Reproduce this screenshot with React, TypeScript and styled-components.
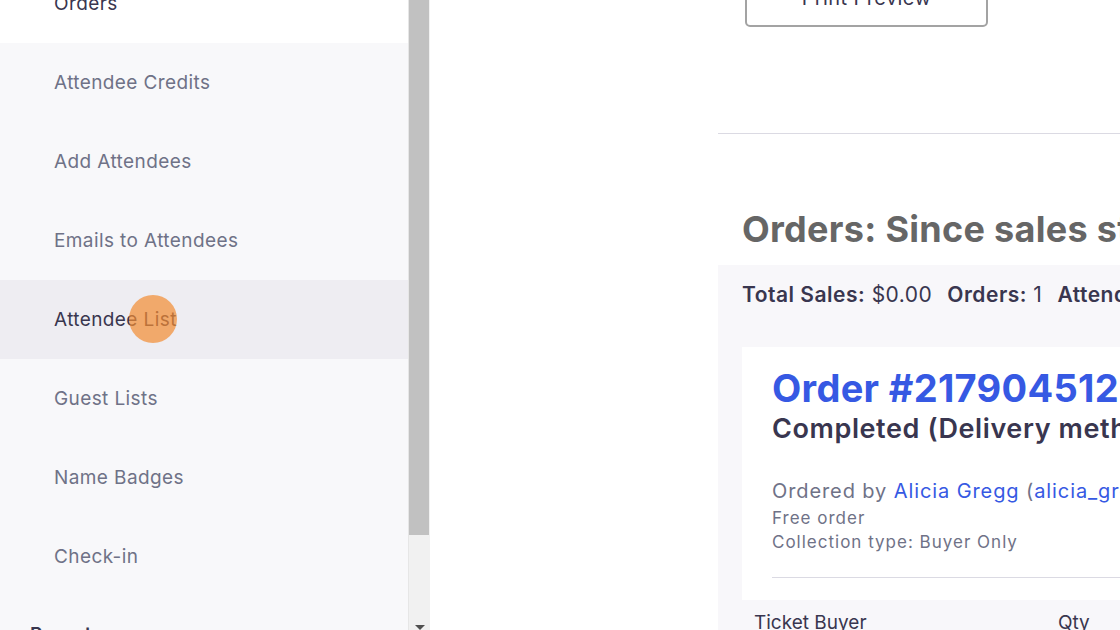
import React from "react";
import styled, { createGlobalStyle } from "styled-components";

const GlobalStyle = createGlobalStyle`
  html, body { margin: 0; padding: 0; overflow: hidden; background: #fff; }
  body { font-family: Inter, "Noto Sans", sans-serif; -webkit-font-smoothing: antialiased; }
  * { box-sizing: border-box; }
`;

const Page = styled.div`
  display: flex;
  width: 1120px;
  height: 630px;
  overflow: hidden;
`;

const Sidebar = styled.nav`
  width: 408px;
  flex: none;
  background: #f8f8fa;
  display: flex;
  flex-direction: column;
`;

const NavList = styled.div`
  margin-top: -36px;
  display: flex;
  flex-direction: column;
`;

const NavItem = styled.div<{ $active?: boolean; $top?: boolean }>`
  position: relative;
  height: 79px;
  display: flex;
  align-items: center;
  padding-left: 54px;
  font-size: 19px;
  letter-spacing: 0.4px;
  color: ${(p) => (p.$active || p.$top ? "#39364f" : "#6f7287")};
  background: ${(p) => (p.$top ? "#ffffff" : p.$active ? "#eeedf2" : "transparent")};
`;

const ClickMark = styled.span`
  position: absolute;
  left: 129px;
  top: 15px;
  width: 48px;
  height: 48px;
  border-radius: 50%;
  background: rgba(242, 140, 50, 0.7);
  pointer-events: none;
`;

const SectionTitle = styled.div`
  padding: 27px 0 0 30px;
  font-size: 19px;
  font-weight: 600;
  color: #39364f;
`;

const ScrollTrack = styled.div`
  width: 22px;
  flex: none;
  background: #f1f1f1;
  border-left: 1px solid #e6e6e6;
  display: flex;
  flex-direction: column;
`;

const ScrollThumb = styled.div`
  height: 535px;
  width: 20px;
  background: #c1c1c1;
`;

const ScrollArrow = styled.div`
  margin-top: auto;
  height: 10px;
  display: flex;
  justify-content: center;
  align-items: flex-end;
  &::after {
    content: "";
    border-left: 5px solid transparent;
    border-right: 5px solid transparent;
    border-top: 5px solid #505050;
  }
`;

const Main = styled.main`
  flex: 1;
  min-width: 0;
  background: #fff;
  padding-left: 288px;
  display: flex;
  flex-direction: column;
  overflow: hidden;
`;

const ButtonRow = styled.div`
  margin-top: -31px;
  padding-left: 27px;
`;

const OutlineButton = styled.button`
  width: 243px;
  height: 58px;
  border: 2px solid #a3a3a3;
  border-radius: 5px;
  background: #fff;
  font-family: inherit;
  font-size: 20px;
  letter-spacing: 0.4px;
  color: #39364f;
  padding: 0;
`;

const Rule = styled.hr`
  margin: 106px 0 0;
  border: 0;
  border-top: 1px solid #dbdae3;
  width: 100%;
`;

const Heading = styled.h1`
  margin: 73px 0 0;
  padding-left: 24px;
  height: 44px;
  line-height: 44px;
  font-size: 36px;
  font-weight: 700;
  color: #666666;
  white-space: nowrap;
  letter-spacing: 0.3px;
`;

const Panel = styled.section`
  margin-top: 14px;
  background: #f8f7fa;
  padding: 15px 0 0 24px;
  flex: 1;
`;

const Stats = styled.div`
  line-height: 30px;
  font-size: 21px;
  letter-spacing: 0.5px;
  color: #39364f;
  white-space: nowrap;
  display: flex;
  gap: 15px;
`;

const Stat = styled.span`
  b { font-weight: 600; }
`;

const Card = styled.article`
  margin-top: 37px;
  background: #fff;
  padding: 23px 0 22px 30px;
  white-space: nowrap;
`;

const OrderTitle = styled.div`
  font-size: 38px;
  line-height: 36px;
  font-weight: 700;
  color: #3659e3;
  letter-spacing: 0.3px;
`;

const Status = styled.div`
  margin-top: 6px;
  font-size: 27px;
  line-height: 34px;
  font-weight: 600;
  color: #39364f;
  letter-spacing: 0.6px;
`;

const Meta = styled.div<{ $big?: boolean; $gap?: number }>`
  margin-top: ${(p) => p.$gap ?? 0}px;
  font-size: ${(p) => (p.$big ? 20 : 17)}px;
  line-height: ${(p) => (p.$big ? 28 : 24)}px;
  color: #6f7287;
  letter-spacing: ${(p) => (p.$big ? 0.9 : 1)}px;
`;

const Link = styled.a`
  color: #3659e3;
  text-decoration: none;
`;

const CardRule = styled.hr`
  margin: 23px 0 0;
  border: 0;
  border-top: 1px solid #dbdae3;
`;

const TableHead = styled.div`
  margin-top: 11px;
  padding-left: 12px;
  display: grid;
  grid-template-columns: 304px 1fr;
  font-size: 19px;
  line-height: 24px;
  color: #39364f;
  white-space: nowrap;
`;

const items = [
  "Attendee Credits",
  "Add Attendees",
  "Emails to Attendees",
  "Attendee List",
  "Guest Lists",
  "Name Badges",
  "Check-in",
];

export default function App() {
  return (
    <>
      <GlobalStyle />
      <Page>
        <Sidebar>
          <NavList>
            <NavItem $top>Orders</NavItem>
            {items.map((label) => (
              <NavItem key={label} $active={label === "Attendee List"}>
                {label}
                {label === "Attendee List" && <ClickMark />}
              </NavItem>
            ))}
          </NavList>
          <SectionTitle>Reports</SectionTitle>
        </Sidebar>
        <ScrollTrack>
          <ScrollThumb />
          <ScrollArrow />
        </ScrollTrack>
        <Main>
          <ButtonRow>
            <OutlineButton>Print Preview</OutlineButton>
          </ButtonRow>
          <Rule />
          <Heading>Orders: Since sales started</Heading>
          <Panel>
            <Stats>
              <Stat>
                <b>Total Sales:</b> $0.00
              </Stat>
              <Stat>
                <b>Orders:</b> 1
              </Stat>
              <Stat>
                <b>Attendees:</b> 1
              </Stat>
            </Stats>
            <Card>
              <OrderTitle>Order #2179045129</OrderTitle>
              <Status>Completed (Delivery method: eTicket)</Status>
              <Meta $big $gap={31}>
                Ordered by <Link>Alicia Gregg</Link> (<Link>alicia_gregg@example.com</Link>)
              </Meta>
              <Meta $gap={1}>Free order</Meta>
              <Meta>Collection type: Buyer Only</Meta>
              <CardRule />
            </Card>
            <TableHead>
              <span>Ticket Buyer</span>
              <span>Qty</span>
            </TableHead>
          </Panel>
        </Main>
      </Page>
    </>
  );
}
